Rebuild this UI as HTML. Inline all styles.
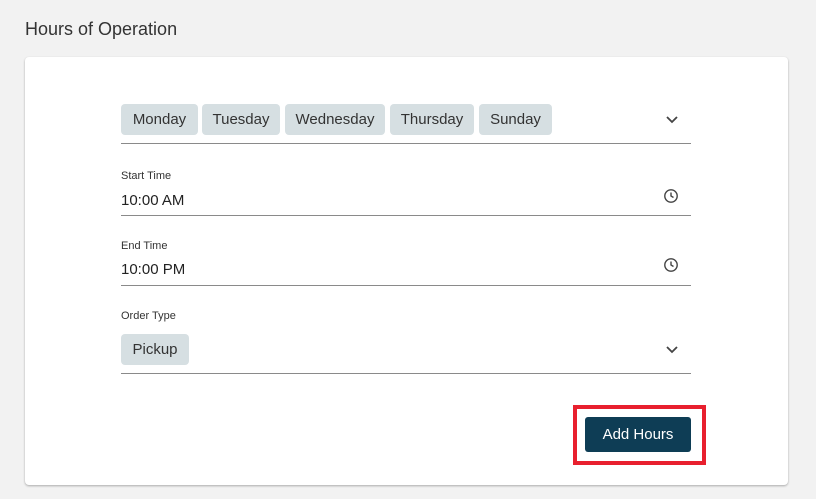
<!DOCTYPE html><html><head><style>
body{margin:0;width:816px;height:499px;background:#f2f2f2;font-family:"Liberation Sans",sans-serif;position:relative;overflow:hidden;color:#222}
.a{position:absolute}
.card{left:25px;top:57px;width:763px;height:428px;background:#fff;border-radius:4px;box-shadow:0 1px 2px rgba(0,0,0,.3)}
.chip{position:absolute;height:31px;background:#d6dfe2;border-radius:4px;font-size:15px;line-height:32px;text-align:center;color:#333}
.line{position:absolute;left:121px;width:570px;height:1px;background:#8a8a8a}
.lab{position:absolute;left:121px;font-size:11px;color:#333}
.val{position:absolute;left:121px;font-size:15px;color:#222}
</style></head><body>
<div class="a" style="left:25px;top:19px;font-size:18px;color:#333">Hours of Operation</div>
<div class="a card"></div>
<div class="chip" style="left:121px;top:104px;width:77px">Monday</div>
<div class="chip" style="left:202px;top:104px;width:78px">Tuesday</div>
<div class="chip" style="left:285px;top:104px;width:100px">Wednesday</div>
<div class="chip" style="left:390px;top:104px;width:84px">Thursday</div>
<div class="chip" style="left:479px;top:104px;width:73px">Sunday</div>
<svg class="a" style="left:665px;top:115px" width="14" height="10"><path d="M2 2l5 5 5-5" stroke="#444" stroke-width="1.8" fill="none"/></svg>
<div class="line" style="top:143px"></div>
<div class="lab" style="top:170px">Start Time</div>
<div class="val" style="top:192px">10:00 AM</div>
<svg class="a" style="left:663px;top:188px" width="16" height="16"><circle cx="8" cy="8" r="6.2" stroke="#444" stroke-width="1.4" fill="none"/><path d="M8 4.5V8l2.5 1.5" stroke="#444" stroke-width="1.4" fill="none"/></svg>
<div class="line" style="top:215px"></div>
<div class="lab" style="top:240px">End Time</div>
<div class="val" style="top:261px">10:00 PM</div>
<svg class="a" style="left:663px;top:257px" width="16" height="16"><circle cx="8" cy="8" r="6.2" stroke="#444" stroke-width="1.4" fill="none"/><path d="M8 4.5V8l2.5 1.5" stroke="#444" stroke-width="1.4" fill="none"/></svg>
<div class="line" style="top:285px"></div>
<div class="lab" style="top:310px">Order Type</div>
<div class="chip" style="left:121px;top:334px;width:68px">Pickup</div>
<svg class="a" style="left:665px;top:345px" width="14" height="10"><path d="M2 2l5 5 5-5" stroke="#444" stroke-width="1.8" fill="none"/></svg>
<div class="line" style="top:373px"></div>
<div class="a" style="left:573px;top:405px;width:125px;height:52px;border:4px solid #e8202e"></div>
<div class="a" style="left:585px;top:417px;width:106px;height:35px;background:#0e3d55;border-radius:3px;color:#fff;font-size:15px;line-height:35px;text-align:center">Add Hours</div>
</body></html>
